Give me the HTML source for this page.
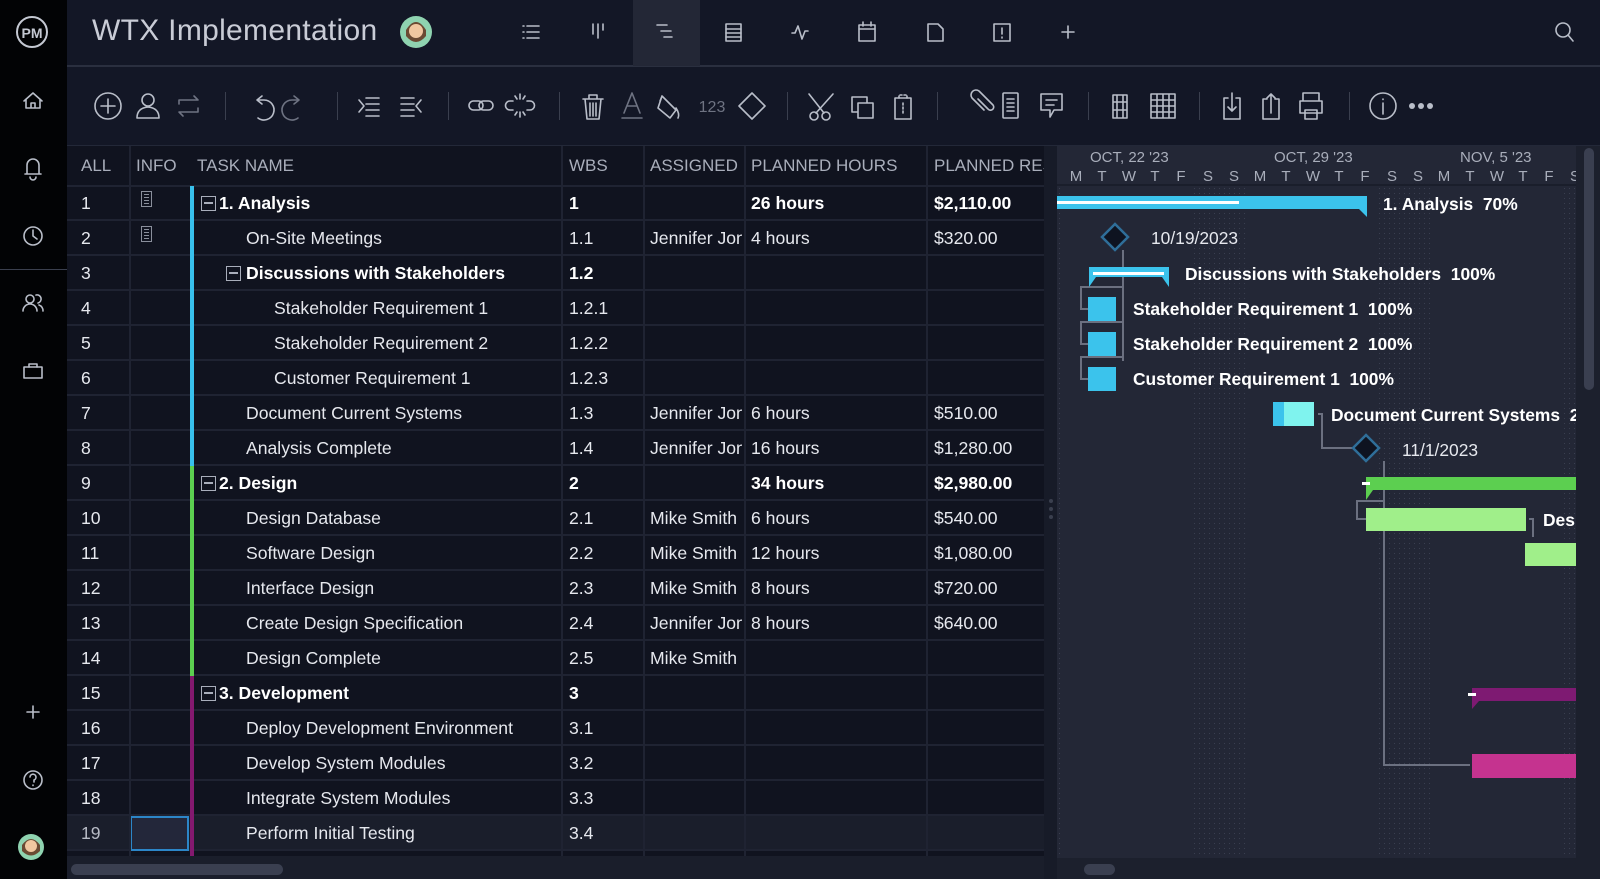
<!DOCTYPE html>
<html><head><meta charset="utf-8"><style>
*{margin:0;padding:0;box-sizing:border-box}
body{width:1600px;height:879px;overflow:hidden;background:#121624;font-family:"Liberation Sans",sans-serif;position:relative;color:#e4e6ec}
.a{position:absolute}
.side{left:0;top:0;width:67px;height:879px;background:#020305}
.top{left:67px;top:0;width:1533px;height:67px;background:#131726;border-bottom:2px solid #2a2f3f}
.tb{left:67px;top:67px;width:1533px;height:79px;background:#131726;border-bottom:1px solid #232838}
svg{position:absolute;overflow:visible}
.ic{stroke:#b9bec9;fill:none;stroke-width:1.6;stroke-linecap:round;stroke-linejoin:round}
.sep{position:absolute;top:92px;width:1px;height:28px;background:#3a3f4e}
.grid{left:67px;top:146px;width:977px;height:710px;background:#10131f}
.hdr{position:absolute;top:146px;height:40px;line-height:40px;font-size:17px;color:#a9aebb}
.row{position:absolute;left:67px;width:977px;height:35px;border-bottom:2px solid #1f2332}
.c{position:absolute;top:0;line-height:34px;font-size:17.6px;white-space:nowrap;overflow:hidden;color:#e6e8ee}
.b{font-weight:bold;color:#fff}
.vl{position:absolute;top:146px;width:2px;height:710px;background:#1f2332}
.gantt{left:1057px;top:146px;width:519px;height:712px;background:#232736}
.box{position:absolute;width:15px;height:15px;border:1.5px solid #a9aebb;top:10px}
.box:after{content:"";position:absolute;left:2px;right:2px;top:5px;height:1.5px;background:#a9aebb}
.gl{position:absolute;font-size:17.4px;font-weight:bold;color:#fff;white-space:nowrap;line-height:20px}
.inf{position:absolute;left:74px;top:5px;width:11px;height:16px;border:1.5px solid #8a8f9c;background:repeating-linear-gradient(#10131f 0 2px,#8a8f9c 2px 3px);background-clip:content-box;padding:1px 2px}
</style></head><body>
<div class="a side"></div>
<div class="a" style="left:0;top:269px;width:67px;height:1px;background:#3a3f4e"></div>
<div class="a top"></div>
<div class="a tb"></div>
<svg width="67" height="879" style="left:0;top:0">
<circle cx="32" cy="32" r="15" stroke="#c4c8d2" stroke-width="2" fill="none"/>
<text x="32" y="38" text-anchor="middle" font-size="14" font-weight="bold" fill="#c4c8d2" font-family="Liberation Sans">PM</text>
<g class="ic" stroke-width="1.4">
<path d="M24 101 L33 93 L42 101 M26 99 V108 H40 V99 M31 108 V103 H35 V108"/>
<path d="M27 174 V165 a6 6 0 0 1 12 0 V174 H25 H41 M30 177 a3 3 0 0 0 6 0"/>
<circle cx="33" cy="236" r="9"/><path d="M33 230 V236 L37 239"/>
<circle cx="30" cy="299" r="4"/><path d="M23 311 a7 7 0 0 1 14 0 M36 295 a4 4 0 0 1 2 8 M39 305 a6 6 0 0 1 4 6"/>
<rect x="24" y="367" width="18" height="11"/><path d="M29 367 V364 H37 V367"/>
<path d="M33 706 V718 M27 712 H39"/>
<circle cx="33" cy="780" r="9"/><path d="M30 777 a3 3 0 1 1 4 3 V782 M33 785 V785.5"/>
</g>
<circle cx="31" cy="847" r="13" fill="#8fd3b0"/><path d="M22 845 q9 -12 18 0 v6 q-9 9 -18 0z" fill="#6b4a33"/><circle cx="31" cy="846" r="6" fill="#f1c7a0"/>
</svg>
<div class="a" style="left:92px;top:14px;font-size:30px;color:#c9ccd6;letter-spacing:0.3px">WTX Implementation</div>
<svg width="40" height="40" style="left:400px;top:16px"><circle cx="16" cy="16" r="16" fill="#8fd3b0"/><path d="M6 14 q10 -16 20 0 v6 q-10 12 -20 0z" fill="#6b4a33"/><circle cx="16" cy="15" r="7" fill="#f1c7a0"/><path d="M9 18 q7 10 14 0 v4 q-7 6 -14 0z" fill="#6b4a33"/></svg>
<div class="a" style="left:633px;top:0;width:67px;height:66px;background:#232736"></div>
<svg width="1600" height="67" style="left:0;top:0"><g class="ic" stroke-width="1.5">
<path d="M527 26 H539 M527 32 H539 M527 38 H539 M523 26 H524 M523 32 H524 M523 38 H524"/>
<path d="M593 24 V34 M598 24 V38 M603 24 V30"/>
<path d="M657 25 H667 M661 31 H671 M664 37 H672"/>
<rect x="726" y="24" width="15" height="17"/><path d="M726 29 H741 M726 33 H741 M726 37 H741"/>
<path d="M792 33 H795 L798 26 L802 39 L805 31 H808"/>
<rect x="859" y="25" width="16" height="16"/><path d="M859 29 H875 M863 22 V26 M871 22 V26"/>
<path d="M928 24 H938 L943 29 V41 H928 Z"/>
<rect x="994" y="24" width="16" height="17"/><path d="M1002 28 V34 M1002 37 V38"/>
<path d="M1068 26 V38 M1062 32 H1074"/>
<circle cx="1563" cy="30" r="7"/><path d="M1568 35 L1573 41"/>
</g></svg>
<svg width="1600" height="146" style="left:0;top:0"><g class="ic">
<circle cx="108" cy="106" r="13"/><path d="M108 99 V113 M101 106 H115"/>
<circle cx="148" cy="100" r="6"/><path d="M137 118 q0 -10 11 -11 q11 1 11 11z"/>
<g stroke="#6e7382"><path d="M179 100 H198 L194 96 M198 112 H179 L183 116 M179 100 V104 M198 112 V108"/></g>
<path d="M262 96 L257 100 L262 104 M257 100 H264 a10 10 0 1 1 -6 18"/>
<g stroke="#6e7382"><path d="M294 96 L299 100 L294 104 M299 100 H292 a10 10 0 1 0 6 18"/></g>
<path d="M364 106 L359 100 M364 106 L359 112 M366 98 H379 M366 104 H379 M366 110 H379 M366 116 H379"/>
<path d="M416 106 L421 100 M416 106 L421 112 M401 98 H414 M401 104 H414 M401 110 H414 M401 116 H414"/>
<rect x="469" y="101" width="14" height="9" rx="4.5"/><rect x="479" y="101" width="14" height="9" rx="4.5"/>
<path d="M513 101 H510 a4.5 4.5 0 0 0 0 9 H513 M527 101 H530 a4.5 4.5 0 0 1 0 9 H527 M520 94 V99 M515 96 L517 99 M525 96 L523 99 M520 112 V117 M515 115 L517 112 M525 115 L523 112"/>
<path d="M583 99 H603 M589 99 V95 H597 V99 M585 99 L587 119 H599 L601 99 M590 103 V116 M593 103 V116 M596 103 V116"/>
<g stroke="#6e7382"><path d="M624 113 L632 93 L640 113 M627 106 H637 M622 118 H642"/></g>
<path d="M662 96 L676 110 L670 118 L658 108 Z M662 96 L660 101 M676 108 q4 6 2 10"/>
<text x="712" y="112" text-anchor="middle" font-size="16" fill="#6e7382" stroke="none" font-family="Liberation Sans">123</text>
<path d="M752 93 L765 106 L752 119 L739 106 Z"/>
<circle cx="814" cy="116" r="4"/><circle cx="826" cy="116" r="4"/><path d="M816 113 L833 94 M824 113 L809 94"/>
<rect x="852" y="97" width="15" height="15"/><rect x="858" y="103" width="15" height="15" fill="#131726"/>
<rect x="895" y="98" width="16" height="21"/><path d="M899 98 V95 H907 V98 M903 103 V115" stroke-dasharray="2 2"/>
<path d="M984 110 L972 98 a5 5 0 0 1 7 -7 L993 105 a3 3 0 0 1 -5 4 L978 99"/>
<rect x="1003" y="93" width="15" height="25" rx="1"/><path d="M1007 99 H1014 M1007 103 H1014 M1007 107 H1014 M1007 111 H1014"/>
<path d="M1041 94 H1062 V110 H1054 L1050 117 V110 H1041 Z M1046 100 H1057 M1046 105 H1054"/>
<path d="M1113 95 H1127 V118 H1113 Z M1117 95 V118 M1123 95 V118 M1113 102 H1127 M1113 110 H1127"/>
<path d="M1151 94 H1175 V118 H1151 Z M1151 100 H1175 M1151 106 H1175 M1151 112 H1175 M1157 94 V118 M1163 94 V118 M1169 94 V118"/>
<path d="M1224 98 H1228 M1236 98 H1240 V119 H1224 V98 M1232 93 V111 L1228 107 M1232 111 L1236 107"/>
<path d="M1263 99 H1267 M1275 99 H1279 V119 H1263 V99 M1271 113 V94 L1267 98 M1271 94 L1275 98"/>
<path d="M1303 101 V93 H1319 V101 M1300 101 H1322 V113 H1300 Z M1305 110 H1317 V119 H1305 Z"/>
<circle cx="1383" cy="106" r="13"/><path d="M1383 103 V114 M1383 99 V99.5"/>
</g>
<circle cx="1412" cy="106" r="3" fill="#b9bec9"/><circle cx="1421" cy="106" r="3" fill="#b9bec9"/><circle cx="1430" cy="106" r="3" fill="#b9bec9"/>
</svg>
<div class="sep" style="left:225px"></div><div class="sep" style="left:337px"></div><div class="sep" style="left:448px"></div><div class="sep" style="left:559px"></div><div class="sep" style="left:787px"></div><div class="sep" style="left:937px"></div><div class="sep" style="left:1088px"></div><div class="sep" style="left:1199px"></div><div class="sep" style="left:1349px"></div>

<div class="a grid"></div>
<div class="a" style="left:67px;top:185px;width:977px;height:2px;background:#1f2332"></div>
<div class="hdr" style="left:81px">ALL</div>
<div class="hdr" style="left:136px">INFO</div>
<div class="hdr" style="left:197px">TASK NAME</div>
<div class="hdr" style="left:569px">WBS</div>
<div class="hdr" style="left:650px">ASSIGNED</div>
<div class="hdr" style="left:751px">PLANNED HOURS</div>
<div class="hdr" style="left:934px;width:110px;overflow:hidden;white-space:nowrap">PLANNED RESOURCES</div>

<div class="row" style="top:186px"><span class="c" style="left:14px">1</span><span class="inf"></span><div class="a" style="left:123px;top:0;width:4px;height:35px;background:#38c0ec"></div><div class="box" style="left:134px"></div><span class="c b" style="left:152px">1. Analysis</span><span class="c b" style="left:502px">1</span><span class="c b" style="left:684px">26 hours</span><span class="c b" style="left:867px">$2,110.00</span></div>
<div class="row" style="top:221px"><span class="c" style="left:14px">2</span><span class="inf"></span><div class="a" style="left:123px;top:0;width:4px;height:35px;background:#38c0ec"></div><span class="c" style="left:179px">On-Site Meetings</span><span class="c" style="left:502px">1.1</span><span class="c" style="left:583px;width:92px">Jennifer Jones</span><span class="c" style="left:684px">4 hours</span><span class="c" style="left:867px">$320.00</span></div>
<div class="row" style="top:256px"><span class="c" style="left:14px">3</span><div class="a" style="left:123px;top:0;width:4px;height:35px;background:#38c0ec"></div><div class="box" style="left:159px"></div><span class="c b" style="left:179px">Discussions with Stakeholders</span><span class="c b" style="left:502px">1.2</span></div>
<div class="row" style="top:291px"><span class="c" style="left:14px">4</span><div class="a" style="left:123px;top:0;width:4px;height:35px;background:#38c0ec"></div><span class="c" style="left:207px">Stakeholder Requirement 1</span><span class="c" style="left:502px">1.2.1</span></div>
<div class="row" style="top:326px"><span class="c" style="left:14px">5</span><div class="a" style="left:123px;top:0;width:4px;height:35px;background:#38c0ec"></div><span class="c" style="left:207px">Stakeholder Requirement 2</span><span class="c" style="left:502px">1.2.2</span></div>
<div class="row" style="top:361px"><span class="c" style="left:14px">6</span><div class="a" style="left:123px;top:0;width:4px;height:35px;background:#38c0ec"></div><span class="c" style="left:207px">Customer Requirement 1</span><span class="c" style="left:502px">1.2.3</span></div>
<div class="row" style="top:396px"><span class="c" style="left:14px">7</span><div class="a" style="left:123px;top:0;width:4px;height:35px;background:#38c0ec"></div><span class="c" style="left:179px">Document Current Systems</span><span class="c" style="left:502px">1.3</span><span class="c" style="left:583px;width:92px">Jennifer Jones</span><span class="c" style="left:684px">6 hours</span><span class="c" style="left:867px">$510.00</span></div>
<div class="row" style="top:431px"><span class="c" style="left:14px">8</span><div class="a" style="left:123px;top:0;width:4px;height:35px;background:#38c0ec"></div><span class="c" style="left:179px">Analysis Complete</span><span class="c" style="left:502px">1.4</span><span class="c" style="left:583px;width:92px">Jennifer Jones</span><span class="c" style="left:684px">16 hours</span><span class="c" style="left:867px">$1,280.00</span></div>
<div class="row" style="top:466px"><span class="c" style="left:14px">9</span><div class="a" style="left:123px;top:0;width:4px;height:35px;background:#5ccf50"></div><div class="box" style="left:134px"></div><span class="c b" style="left:152px">2. Design</span><span class="c b" style="left:502px">2</span><span class="c b" style="left:684px">34 hours</span><span class="c b" style="left:867px">$2,980.00</span></div>
<div class="row" style="top:501px"><span class="c" style="left:14px">10</span><div class="a" style="left:123px;top:0;width:4px;height:35px;background:#5ccf50"></div><span class="c" style="left:179px">Design Database</span><span class="c" style="left:502px">2.1</span><span class="c" style="left:583px;width:92px">Mike Smith</span><span class="c" style="left:684px">6 hours</span><span class="c" style="left:867px">$540.00</span></div>
<div class="row" style="top:536px"><span class="c" style="left:14px">11</span><div class="a" style="left:123px;top:0;width:4px;height:35px;background:#5ccf50"></div><span class="c" style="left:179px">Software Design</span><span class="c" style="left:502px">2.2</span><span class="c" style="left:583px;width:92px">Mike Smith</span><span class="c" style="left:684px">12 hours</span><span class="c" style="left:867px">$1,080.00</span></div>
<div class="row" style="top:571px"><span class="c" style="left:14px">12</span><div class="a" style="left:123px;top:0;width:4px;height:35px;background:#5ccf50"></div><span class="c" style="left:179px">Interface Design</span><span class="c" style="left:502px">2.3</span><span class="c" style="left:583px;width:92px">Mike Smith</span><span class="c" style="left:684px">8 hours</span><span class="c" style="left:867px">$720.00</span></div>
<div class="row" style="top:606px"><span class="c" style="left:14px">13</span><div class="a" style="left:123px;top:0;width:4px;height:35px;background:#5ccf50"></div><span class="c" style="left:179px">Create Design Specification</span><span class="c" style="left:502px">2.4</span><span class="c" style="left:583px;width:92px">Jennifer Jones</span><span class="c" style="left:684px">8 hours</span><span class="c" style="left:867px">$640.00</span></div>
<div class="row" style="top:641px"><span class="c" style="left:14px">14</span><div class="a" style="left:123px;top:0;width:4px;height:35px;background:#5ccf50"></div><span class="c" style="left:179px">Design Complete</span><span class="c" style="left:502px">2.5</span><span class="c" style="left:583px;width:92px">Mike Smith</span></div>
<div class="row" style="top:676px"><span class="c" style="left:14px">15</span><div class="a" style="left:123px;top:0;width:4px;height:35px;background:#84196f"></div><div class="box" style="left:134px"></div><span class="c b" style="left:152px">3. Development</span><span class="c b" style="left:502px">3</span></div>
<div class="row" style="top:711px"><span class="c" style="left:14px">16</span><div class="a" style="left:123px;top:0;width:4px;height:35px;background:#84196f"></div><span class="c" style="left:179px">Deploy Development Environment</span><span class="c" style="left:502px">3.1</span></div>
<div class="row" style="top:746px"><span class="c" style="left:14px">17</span><div class="a" style="left:123px;top:0;width:4px;height:35px;background:#84196f"></div><span class="c" style="left:179px">Develop System Modules</span><span class="c" style="left:502px">3.2</span></div>
<div class="row" style="top:781px"><span class="c" style="left:14px">18</span><div class="a" style="left:123px;top:0;width:4px;height:35px;background:#84196f"></div><span class="c" style="left:179px">Integrate System Modules</span><span class="c" style="left:502px">3.3</span></div>
<div class="row" style="top:816px;background:#1a1e2b"><span class="c" style="left:14px;color:#b8bcc6">19</span><div class="a" style="left:63px;top:0;width:59px;height:35px;border:2px solid #2c86c8;background:#23273a"></div><div class="a" style="left:123px;top:0;width:4px;height:35px;background:#84196f"></div><span class="c" style="left:179px">Perform Initial Testing</span><span class="c" style="left:502px">3.4</span></div>
<div class="a" style="left:190px;top:851px;width:4px;height:5px;background:#84196f"></div>
<div class="vl" style="left:129px"></div><div class="vl" style="left:561px"></div><div class="vl" style="left:643px"></div><div class="vl" style="left:744px"></div><div class="vl" style="left:926px"></div>
<div class="a" style="left:67px;top:856px;width:977px;height:23px;background:#1a1e2b"></div>
<div class="a" style="left:71px;top:864px;width:212px;height:11px;border-radius:6px;background:#3a3f50"></div>
<div class="a" style="left:1044px;top:146px;width:13px;height:733px;background:#171b28"></div>
<div class="a" style="left:1049px;top:499px;width:4px;height:4px;border-radius:2px;background:#3a3f4e;box-shadow:0 8px 0 #3a3f4e,0 16px 0 #3a3f4e"></div>
<div class="a gantt"></div>
<div class="a" style="left:1057px;top:146px;width:519px;height:40px;background:#232736;border-bottom:2px solid #1a1e2b"></div>
<svg width="519" height="672" style="left:1057px;top:186px">
<defs><pattern id="d" width="5" height="5" patternUnits="userSpaceOnUse"><rect x="2" y="2" width="1" height="1" fill="#3a3f50"/></pattern></defs>
<rect x="137" y="0" width="53" height="672" fill="url(#d)"/>
<rect x="321" y="0" width="53" height="672" fill="url(#d)"/>
<rect x="0" y="0" width="6" height="672" fill="url(#d)"/>
<rect x="506" y="0" width="13" height="672" fill="url(#d)"/>
</svg>
<div class="a" style="left:1057px;top:146px;width:519px;font-size:15px;color:#a9aebb">
<span class="a" style="left:33px;top:3px">OCT, 22 '23</span><span class="a" style="left:217px;top:3px">OCT, 29 '23</span><span class="a" style="left:403px;top:3px">NOV, 5 '23</span>
</div>
<svg width="519" height="30" style="left:1057px;top:164px"><g font-size="15" fill="#a9aebb" text-anchor="middle" font-family="Liberation Sans">
<text x="19" y="17">M</text><text x="45" y="17">T</text><text x="72" y="17">W</text><text x="98" y="17">T</text><text x="124" y="17">F</text><text x="151" y="17">S</text><text x="177" y="17">S</text>
<text x="203" y="17">M</text><text x="229" y="17">T</text><text x="256" y="17">W</text><text x="282" y="17">T</text><text x="308" y="17">F</text><text x="335" y="17">S</text><text x="361" y="17">S</text>
<text x="387" y="17">M</text><text x="413" y="17">T</text><text x="440" y="17">W</text><text x="466" y="17">T</text><text x="492" y="17">F</text><text x="518" y="17">S</text>
</g></svg>
<svg width="1600" height="879" style="left:0;top:0">
<defs><clipPath id="g"><rect x="1057" y="186" width="519" height="672"/></clipPath></defs>
<g clip-path="url(#g)">
<g stroke="#6b7080" stroke-width="2" fill="none">
<path d="M1123 250 V361"/>
<path d="M1123 287 H1081 V309 H1088 M1123 322 H1081 V344 H1088 M1123 357 H1081 V379 H1088"/>
<path d="M1318 414 H1322 V448 H1352"/>
<path d="M1384 461 V765 H1470"/>
<path d="M1384 501 H1357 V519 H1366"/>
<path d="M1529 519 H1533 V537"/>
</g>
<path d="M1057 196 H1367 V217 L1359 209 H1057Z" fill="#3bc3ec"/>
<rect x="1057" y="201" width="182" height="3" fill="#fff"/>
<path d="M1115 224 L1128 237 L1115 250 L1102 237Z" fill="#0e1320" stroke="#2f6e99" stroke-width="2.5"/>
<path d="M1089 267 H1169 V287 L1162 277 H1096 L1089 287Z" fill="#3bc3ec"/>
<rect x="1093" y="272" width="71" height="3" fill="#fff"/>
<rect x="1088" y="297" width="28" height="24" fill="#3bc3ec"/>
<rect x="1088" y="332" width="28" height="24" fill="#3bc3ec"/>
<rect x="1088" y="367" width="28" height="24" fill="#3bc3ec"/>
<rect x="1273" y="402" width="41" height="24" fill="#7ff3ee"/><rect x="1273" y="402" width="11" height="24" fill="#3bc3ec"/>
<path d="M1366 435 L1379 448 L1366 461 L1353 448Z" fill="#0e1320" stroke="#2f6e99" stroke-width="2.5"/>
<path d="M1366 477 H1580 V490 H1373 L1366 500Z" fill="#5ccf50"/>
<rect x="1362" y="482" width="8" height="3" fill="#fff"/>
<rect x="1366" y="508" width="160" height="23" fill="#a0ef8a"/>
<rect x="1525" y="543" width="55" height="23" fill="#a0ef8a"/>
<path d="M1472 688 H1580 V701 H1479 L1472 709Z" fill="#7e1a72"/>
<rect x="1468" y="693" width="8" height="3" fill="#fff"/>
<rect x="1472" y="754" width="108" height="24" fill="#c5338f"/>
<text x="1543" y="526" font-size="17.4" font-weight="bold" fill="#fff" font-family="Liberation Sans">Design Database</text>
<text x="1331" y="421" font-size="17.4" font-weight="bold" fill="#fff" font-family="Liberation Sans" xml:space="preserve">Document Current Systems  200%</text>
</g></svg>
<div class="gl" style="left:1383px;top:194px">1. Analysis&nbsp; 70%</div>
<div class="gl" style="left:1151px;top:228px;font-weight:normal;color:#e6e8ee">10/19/2023</div>
<div class="gl" style="left:1185px;top:264px">Discussions with Stakeholders&nbsp; 100%</div>
<div class="gl" style="left:1133px;top:299px">Stakeholder Requirement 1&nbsp; 100%</div>
<div class="gl" style="left:1133px;top:334px">Stakeholder Requirement 2&nbsp; 100%</div>
<div class="gl" style="left:1133px;top:369px">Customer Requirement 1&nbsp; 100%</div>
<div class="gl" style="left:1402px;top:440px;font-weight:normal;color:#e6e8ee">11/1/2023</div>
<div class="a" style="left:1057px;top:858px;width:519px;height:21px;background:#1c202d"></div>
<div class="a" style="left:1084px;top:864px;width:31px;height:11px;border-radius:6px;background:#3a3f50"></div>
<div class="a" style="left:1576px;top:146px;width:24px;height:733px;background:#1c202d"></div>
<div class="a" style="left:1584px;top:148px;width:10px;height:242px;border-radius:5px;background:#3a3f50"></div>
</body></html>
